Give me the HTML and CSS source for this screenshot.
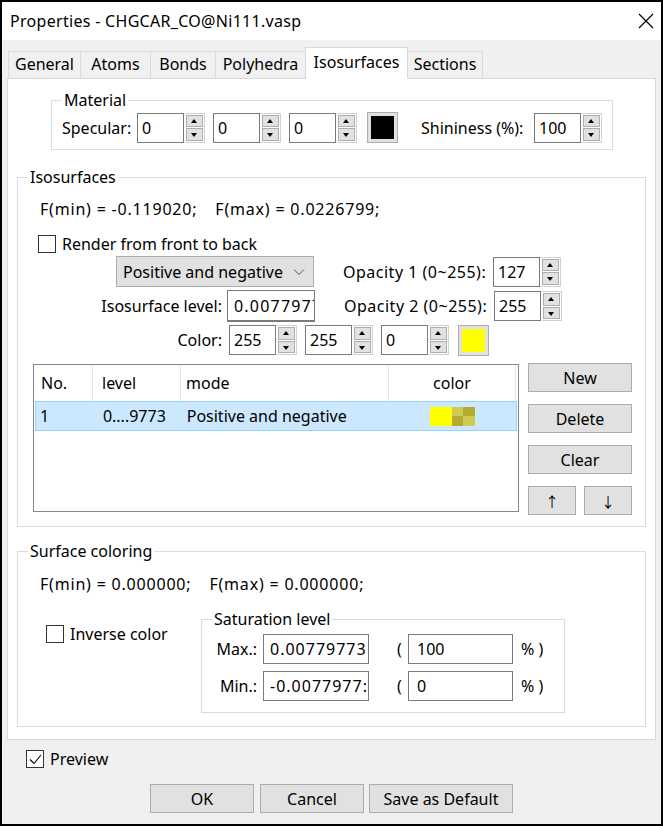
FILE: index.html
```html
<!DOCTYPE html>
<html lang="en">
<head>
    <meta charset="UTF-8">
    <title>Properties - CHGCAR_CO@Ni111.vasp</title>
    <link rel="stylesheet" href="styles.css">
</head>
<body>
    <div class="window">
        <div class="titlebar">
            <span class="title">Properties - CHGCAR_CO@Ni111.vasp</span>
            <svg class="close" width="16" height="16" viewBox="0 0 16 16">
                <path d="M1 1 L15 15 M15 1 L1 15" stroke="#000" stroke-width="1.2" fill="none"/>
            </svg>
        </div>

        <div class="tabs">
            <div class="tab w-general">General</div>
            <div class="tab w-atoms">Atoms</div>
            <div class="tab w-bonds">Bonds</div>
            <div class="tab w-poly">Polyhedra</div>
            <div class="tab active w-iso">Isosurfaces</div>
            <div class="tab w-sect">Sections</div>
        </div>

        <div class="panel">
            <!-- Material -->
            <fieldset class="group material">
                <legend>Material</legend>
                <div class="row">
                    <span class="lbl w-spec">Specular:</span>
                    <div class="spin"><span class="edit">0</span><span class="arrows"><i class="up"></i><i class="down"></i></span></div>
                    <div class="spin gap8"><span class="edit">0</span><span class="arrows"><i class="up"></i><i class="down"></i></span></div>
                    <div class="spin gap8"><span class="edit">0</span><span class="arrows"><i class="up"></i><i class="down"></i></span></div>
                    <div class="swatch black"><span></span></div>
                    <span class="lbl w-shine">Shininess (%):</span>
                    <div class="spin"><span class="edit">100</span><span class="arrows"><i class="up"></i><i class="down"></i></span></div>
                </div>
            </fieldset>

            <!-- Isosurfaces -->
            <fieldset class="group iso">
                <legend>Isosurfaces</legend>
                <div class="fline">F(min) = -0.119020;<span class="fmax">F(max) = 0.0226799;</span></div>
                <div class="check render"><span class="box"></span>Render from front to back</div>

                <div class="row r-mode">
                    <div class="combo">Positive and negative
                        <svg width="12" height="8" viewBox="0 0 12 8"><path d="M1 1.5 L6 6.5 L11 1.5" stroke="#555" stroke-width="1" fill="none"/></svg>
                    </div>
                    <span class="lbl w-opa">Opacity 1 (0~255):</span>
                    <div class="spin"><span class="edit">127</span><span class="arrows"><i class="up"></i><i class="down"></i></span></div>
                </div>

                <div class="row r-level">
                    <span class="lbl right w-left">Isosurface level:</span>
                    <span class="edit level">0.0077977</span>
                    <span class="lbl w-opa">Opacity 2 (0~255):</span>
                    <div class="spin"><span class="edit">255</span><span class="arrows"><i class="up"></i><i class="down"></i></span></div>
                </div>

                <div class="row r-color">
                    <span class="lbl right w-left">Color:</span>
                    <div class="spin"><span class="edit">255</span><span class="arrows"><i class="up"></i><i class="down"></i></span></div>
                    <div class="spin gap8"><span class="edit">255</span><span class="arrows"><i class="up"></i><i class="down"></i></span></div>
                    <div class="spin gap8"><span class="edit">0</span><span class="arrows"><i class="up"></i><i class="down"></i></span></div>
                    <div class="swatch yellow"><span></span></div>
                </div>

                <div class="list-area">
                    <div class="list">
                        <div class="lhead">
                            <span class="c-no">No.</span>
                            <span class="c-level">level</span>
                            <span class="c-mode">mode</span>
                            <span class="c-color">color</span>
                        </div>
                        <div class="lrow selected">
                            <span class="c-no">1</span>
                            <span class="c-level">0....9773</span>
                            <span class="c-mode">Positive and negative</span>
                            <span class="c-color">
                                <span class="chip">
                                    <span class="chip-solid"></span>
                                    <span class="chip-checker"><i class="lt"></i><i class="dk"></i><i class="dk"></i><i class="lt"></i></span>
                                </span>
                            </span>
                        </div>
                    </div>
                    <div class="list-buttons">
                        <button class="btn">New</button>
                        <button class="btn">Delete</button>
                        <button class="btn">Clear</button>
                        <div class="updown">
                            <button class="btn arrow">&#8593;</button>
                            <button class="btn arrow">&#8595;</button>
                        </div>
                    </div>
                </div>
            </fieldset>

            <!-- Surface coloring -->
            <fieldset class="group surface">
                <legend>Surface coloring</legend>
                <div class="fline">F(min) = 0.000000;<span class="fmax">F(max) = 0.000000;</span></div>
                <div class="surface-row">
                    <div class="check inverse"><span class="box"></span>Inverse color</div>
                    <fieldset class="group saturation">
                        <legend>Saturation level</legend>
                        <div class="sat-row">
                            <span class="lbl right w-sat">Max.:</span>
                            <span class="edit sat">0.00779773</span>
                            <span class="paren">(</span>
                            <span class="edit pct">100</span>
                            <span class="unit">% )</span>
                        </div>
                        <div class="sat-row second">
                            <span class="lbl right w-sat">Min.:</span>
                            <span class="edit sat">-0.0077977:</span>
                            <span class="paren">(</span>
                            <span class="edit pct">0</span>
                            <span class="unit">% )</span>
                        </div>
                    </fieldset>
                </div>
            </fieldset>
        </div>

        <div class="check preview">
            <span class="box checked">
                <svg width="15" height="15" viewBox="0 0 15 15"><path d="M2 7.5 L6 11.5 L13 3" stroke="#000" stroke-width="1.1" fill="none"/></svg>
            </span>Preview
        </div>

        <div class="actions">
            <button class="btn w-ok">OK</button>
            <button class="btn w-cancel">Cancel</button>
            <button class="btn w-save">Save as Default</button>
        </div>
    </div>
</body>
</html>
```

FILE: styles.css
```css
* {
    box-sizing: border-box;
}

body {
    margin: 0;
    background: #000;
    font-family: "Noto Sans", "Noto Sans CJK KR", sans-serif;
    font-size: 16px;
    color: #000;
}

.window {
    width: 663px;
    height: 826px;
    border: 2px solid #000;
    background: #f0f0f0;
    display: flex;
    flex-direction: column;
}

/* --- title bar --- */

.titlebar {
    height: 38px;
    background: #fff;
    display: flex;
    align-items: center;
    justify-content: space-between;
    padding: 0 7px 0 8px;
}

.title {
    font-size: 16px;
    line-height: 20px;
    letter-spacing: 0.3px;
}

/* --- tabs --- */

.tabs {
    display: flex;
    align-items: flex-end;
    height: 38px;
    padding-left: 6px;
}

.tab {
    height: 27px;
    line-height: 25px;
    text-align: center;
    background: #f0f0f0;
    border: 1px solid #d9d9d9;
    border-bottom: none;
    margin-right: -1px;
    font-size: 16px;
}

.tab.active {
    height: 32px;
    line-height: 28px;
    background: #fff;
    margin-bottom: -1px;
    position: relative;
    z-index: 1;
}

.w-general { width: 73px; }
.w-atoms { width: 71px; }
.w-bonds { width: 66px; }
.w-poly { width: 91px; }
.w-iso { width: 103px; }
.w-sect { width: 76px; }

.panel {
    margin: 0 5px;
    height: 662px;
    background: #fff;
    border: 1px solid #d9d9d9;
}

/* --- group boxes --- */

.group {
    border: 1px solid #dcdcdc;
    margin: 0;
    padding: 0 0 0 10px;
    min-width: 0;
}

.group legend {
    padding: 0 2px;
    line-height: 20px;
    height: 20px;
}

.material {
    margin: 11px 0 0 43px;
    width: 562px;
    padding-top: 2px;
    padding-bottom: 6px;
}

.iso {
    margin: 17px 0 0 9px;
    width: 629px;
    padding-bottom: 11px;
}

.surface {
    margin: 14px 0 0 9px;
    width: 629px;
    padding-bottom: 13px;
}

.row {
    display: flex;
    align-items: center;
}

.lbl {
    line-height: 20px;
    white-space: nowrap;
}

.lbl.right {
    text-align: right;
}

.w-spec { width: 75px; }
.w-shine { width: 113px; margin-left: 23px; }
.w-opa { width: 150px; margin-left: 29px; letter-spacing: 0.5px; }
.w-left { width: 199px; padding-right: 5px; }

/* --- edit boxes and spinners --- */

.edit {
    display: flex;
    align-items: center;
    height: 30px;
    padding: 0 4px;
    background: #fff;
    border: 1px solid #7a7a7a;
    white-space: nowrap;
    overflow: hidden;
}

.spin {
    display: flex;
    align-items: center;
    width: 68px;
    height: 30px;
}

.spin .edit {
    width: 47px;
}

.spin.gap8 {
    margin-left: 8px;
}

.arrows {
    display: flex;
    flex-direction: column;
    gap: 1px;
    margin-left: 1px;
    height: 30px;
    padding: 1px;
    border: 1px solid #d0d0d0;
    border-left: none;
}

.arrows i {
    display: block;
    width: 17px;
    height: 13px;
    background: #e1e1e1;
    border: 1px solid #adadad;
    position: relative;
}

.arrows i::after {
    content: "";
    position: absolute;
    left: 4px;
    width: 0;
    height: 0;
    border-left: 3.5px solid transparent;
    border-right: 3.5px solid transparent;
}

.arrows .up::after {
    top: 3px;
    border-bottom: 4px solid #000;
}

.arrows .down::after {
    top: 4px;
    border-top: 4px solid #000;
}

.swatch {
    width: 31px;
    height: 31px;
    padding: 3px;
    background: #e1e1e1;
    border: 1px solid #adadad;
    margin-left: 10px;
}

.swatch span {
    display: block;
    width: 100%;
    height: 100%;
}

.swatch.black span { background: #000; }
.swatch.yellow span { background: #ffff00; }
.r-color .swatch { margin-left: 9px; }

/* --- isosurface controls --- */

.fline {
    line-height: 20px;
    padding-left: 12px;
    margin-top: 12px;
    white-space: nowrap;
    letter-spacing: 0.8px;
}

.fmax {
    margin-left: 18px;
}

.check {
    display: flex;
    align-items: center;
    line-height: 20px;
}

.check .box {
    width: 18px;
    height: 18px;
    border: 1px solid #333;
    background: #fff;
    margin-right: 6px;
    display: flex;
    align-items: center;
    justify-content: center;
}

.render {
    margin-top: 15px;
    padding-left: 10px;
}

.r-mode {
    margin-top: 2px;
    padding-left: 88px;
    height: 31px;
}

.combo {
    width: 198px;
    height: 31px;
    display: flex;
    align-items: center;
    justify-content: space-between;
    padding: 0 8px 0 6px;
    background: #e1e1e1;
    border: 1px solid #adadad;
}

.r-mode .w-opa { margin-left: 29px; }

.r-level {
    margin-top: 3px;
    height: 32px;
}

.edit.level {
    width: 88px;
    height: 32px;
    padding: 0 3px 0 6px;
    border-bottom-width: 2px;
    letter-spacing: 1.2px;
}

.r-color {
    margin-top: 3px;
    height: 30px;
}

.r-color .w-left { width: 201px; padding-right: 7px; }

/* --- list view --- */

.list-area {
    display: flex;
    margin-top: 9px;
}

.list {
    margin-left: 5px;
    width: 486px;
    height: 148px;
    border: 1px solid #828790;
    background: #fff;
}

.lhead,
.lrow {
    display: flex;
    align-items: center;
}

.lhead {
    height: 36px;
}

.lhead span {
    height: 36px;
    line-height: 36px;
    border-right: 1px solid #e5e5e5;
}

.c-no { width: 59px; padding-left: 7px; }
.c-level { width: 88px; padding-left: 9px; }
.c-mode { width: 208px; padding-left: 5px; }
.c-color { width: 127px; text-align: center; }

.lrow.selected {
    height: 30px;
    margin: 0 1px;
    background: #cce8ff;
    border: 1px solid #99d1ff;
}

.lrow .c-no { width: 58px; padding-left: 4px; }

.lrow .c-color {
    display: flex;
    justify-content: center;
}

.chip {
    display: flex;
    width: 45px;
    height: 19px;
}

.chip-solid {
    width: 22px;
    background: #ffff00;
}

.chip-checker {
    width: 23px;
    display: grid;
    grid-template-columns: 11px 12px;
    grid-template-rows: 9px 10px;
}

.chip-checker .lt { background: #cdca55; }
.chip-checker .dk { background: #b2ad30; }

.list-buttons {
    margin-left: 9px;
    width: 104px;
    margin-top: -1px;
    display: flex;
    flex-direction: column;
    gap: 12px;
}

.btn {
    font-family: inherit;
    font-size: 16px;
    color: #000;
    height: 29px;
    padding: 0;
    background: #e1e1e1;
    border: 1px solid #adadad;
}

.updown {
    display: flex;
    justify-content: space-between;
}

.updown .btn {
    width: 48px;
}

.btn.arrow {
    font-size: 14px;
}

/* --- surface coloring --- */

.surface .fline {
    margin-top: 13px;
}

.surface-row {
    display: flex;
    margin-top: 15px;
}

.inverse {
    width: 173px;
    padding-left: 18px;
    margin-top: 15px;
    align-self: flex-start;
}

.saturation {
    width: 364px;
    padding-bottom: 11px;
}

.sat-row {
    display: flex;
    align-items: center;
    margin-top: 5px;
}

.sat-row.second {
    margin-top: 7px;
}

.w-sat {
    width: 51px;
    padding-right: 6px;
}

.edit.sat {
    width: 106px;
    padding-left: 6px;
    letter-spacing: 1px;
}

.paren {
    margin-left: 28px;
    width: 11px;
}

.edit.pct {
    width: 105px;
    padding-left: 8px;
}

.unit {
    margin-left: 8px;
}

/* --- bottom of dialog --- */

.preview {
    margin: 9px 0 0 24px;
}

.actions {
    display: flex;
    margin: 15px 0 0 148px;
}

.w-ok { width: 104px; }
.w-cancel { width: 104px; margin-left: 6px; }
.w-save { width: 144px; margin-left: 5px; }
```
